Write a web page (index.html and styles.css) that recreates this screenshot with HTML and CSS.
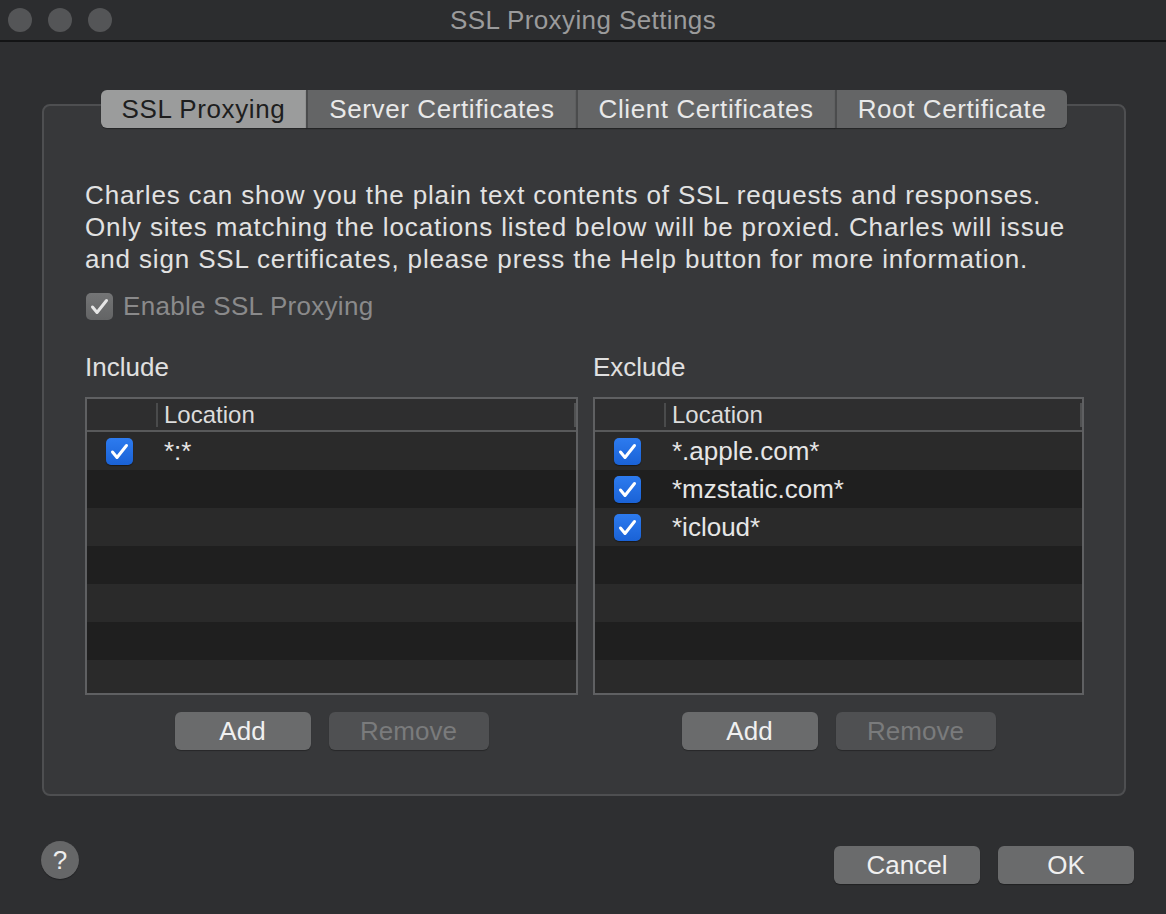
FILE: index.html
```html
<!DOCTYPE html>
<html>
<head>
<meta charset="utf-8">
<title>SSL Proxying Settings</title>
<link rel="stylesheet" href="styles.css">
</head>
<body>
<div class="window">
  <div class="titlebar">
    <div class="lights"><span class="light"></span><span class="light"></span><span class="light"></span></div>
    <div class="title">SSL Proxying Settings</div>
    <div></div>
  </div>
  <div class="main">
    <div class="tabs">
      <div class="tab sel">SSL Proxying</div>
      <div class="tab">Server Certificates</div>
      <div class="tab">Client Certificates</div>
      <div class="tab">Root Certificate</div>
    </div>
    <div class="box">
      <p class="desc">Charles can show you the plain text contents of SSL requests and responses.<br>Only sites matching the locations listed below will be proxied. Charles will issue<br>and sign SSL certificates, please press the Help button for more information.</p>
      <div class="enable">
        <span class="cb dis"><svg viewBox="0 0 27 27" width="27" height="27"><path d="M6.5 14 L11 19.5 L20.5 7.5" fill="none" stroke="#e6e6e6" stroke-width="3" stroke-linecap="round" stroke-linejoin="round"/></svg></span>
        <span>Enable SSL Proxying</span>
      </div>
      <div class="lists">
        <div class="list">
          <div class="list-label">Include</div>
          <div class="table">
            <div class="thead"><div class="th-cb"></div><div class="th-loc">Location</div><div class="th-end"></div></div>
            <div class="row"><div class="c-cb"><span class="cb on"><svg viewBox="0 0 27 27" width="27" height="27"><path d="M6.5 14 L11 19.5 L20.5 7.5" fill="none" stroke="#ffffff" stroke-width="3" stroke-linecap="round" stroke-linejoin="round"/></svg></span></div><div class="c-loc">*:*</div></div>
            <div class="row"></div>
            <div class="row"></div>
            <div class="row"></div>
            <div class="row"></div>
            <div class="row"></div>
            <div class="row"></div>
          </div>
          <div class="btns"><button class="btn add">Add</button><button class="btn remove" disabled>Remove</button></div>
        </div>
        <div class="list">
          <div class="list-label">Exclude</div>
          <div class="table">
            <div class="thead"><div class="th-cb"></div><div class="th-loc">Location</div><div class="th-end"></div></div>
            <div class="row"><div class="c-cb"><span class="cb on"><svg viewBox="0 0 27 27" width="27" height="27"><path d="M6.5 14 L11 19.5 L20.5 7.5" fill="none" stroke="#ffffff" stroke-width="3" stroke-linecap="round" stroke-linejoin="round"/></svg></span></div><div class="c-loc">*.apple.com*</div></div>
            <div class="row"><div class="c-cb"><span class="cb on"><svg viewBox="0 0 27 27" width="27" height="27"><path d="M6.5 14 L11 19.5 L20.5 7.5" fill="none" stroke="#ffffff" stroke-width="3" stroke-linecap="round" stroke-linejoin="round"/></svg></span></div><div class="c-loc">*mzstatic.com*</div></div>
            <div class="row"><div class="c-cb"><span class="cb on"><svg viewBox="0 0 27 27" width="27" height="27"><path d="M6.5 14 L11 19.5 L20.5 7.5" fill="none" stroke="#ffffff" stroke-width="3" stroke-linecap="round" stroke-linejoin="round"/></svg></span></div><div class="c-loc">*icloud*</div></div>
            <div class="row"></div>
            <div class="row"></div>
            <div class="row"></div>
            <div class="row"></div>
          </div>
          <div class="btns"><button class="btn add">Add</button><button class="btn remove" disabled>Remove</button></div>
        </div>
      </div>
    </div>
  </div>
  <div class="footer">
    <div class="help">?</div>
    <div class="actions"><button class="btn cancel">Cancel</button><button class="btn ok">OK</button></div>
  </div>
</div>
</body>
</html>
```

FILE: styles.css
```css
html, body {
  margin: 0;
  padding: 0;
  background: #2e2f31;
}
body {
  font-family: "Liberation Sans", Arial, sans-serif;
  font-size: 26px;
  color: #e0e0e0;
}
.window {
  width: 1166px;
  height: 914px;
  overflow: hidden;
  background: #2e2f31;
}
.titlebar {
  height: 40px;
  border-bottom: 2px solid #131415;
  background: #2c2d2f;
  display: grid;
  grid-template-columns: 1fr auto 1fr;
  align-items: center;
}
.lights {
  display: flex;
  gap: 16px;
  padding-left: 8px;
}
.light {
  width: 24px;
  height: 24px;
  border-radius: 50%;
  background: #545557;
}
.title {
  color: #9b9b9c;
  font-size: 26px;
  letter-spacing: 0.4px;
}
.main {
  padding: 48px 40px 0 42px;
  display: flex;
  flex-direction: column;
}
.tabs {
  display: flex;
  justify-content: center;
  position: relative;
  z-index: 1;
  height: 38px;
}
.tab {
  padding: 0 21px;
  line-height: 38px;
  letter-spacing: 0.6px;
  background: #646566;
  color: #e9e9e9;
  border-left: 2px solid #4b4c4d;
  box-shadow: 0 1px 1px rgba(0,0,0,0.35);
  white-space: nowrap;
}
.tab:first-child {
  border-left: none;
  border-radius: 6px 0 0 6px;
}
.tab:last-child {
  border-radius: 0 6px 6px 0;
}
.tab.sel {
  background: #9b9c9c;
  color: #1e1e1e;
}
.box {
  margin-top: -24px;
  height: 692px;
  box-sizing: border-box;
  border: 2px solid #4e4f51;
  border-radius: 8px;
  background: #37383a;
  padding: 73px 40px 0 41px;
}
.desc {
  margin: 0;
  line-height: 32px;
  letter-spacing: 0.85px;
  color: #e2e2e2;
  white-space: nowrap;
}
.enable {
  display: flex;
  align-items: center;
  gap: 10px;
  height: 32px;
  margin-top: 15px;
  padding-left: 1px;
  letter-spacing: 0.3px;
  color: #8a8a8b;
}
.cb {
  width: 27px;
  height: 27px;
  border-radius: 5px;
  display: block;
  flex: none;
}
.cb svg {
  display: block;
}
.cb.dis {
  background: linear-gradient(#747576, #636465);
}
.cb.on {
  background: linear-gradient(#2d7bef, #1a62d6);
  box-shadow: 0 1px 1px rgba(0,0,0,0.4);
}
.lists {
  margin-top: 29px;
  display: grid;
  grid-template-columns: 493px 491px;
  column-gap: 15px;
}
.list-label {
  line-height: 32px;
  color: #e0e0e0;
}
.table {
  margin-top: 14px;
  height: 298px;
  box-sizing: border-box;
  border: 2px solid #5f6062;
  background: #1f1f1f;
  overflow: hidden;
}
.thead {
  height: 31px;
  border-bottom: 2px solid #58595a;
  background: #2e2e2f;
  display: flex;
  align-items: center;
}
.th-cb {
  width: 71px;
  height: 24px;
  box-sizing: border-box;
  border-right: 2px solid #4a4b4c;
  flex: none;
}
.th-loc {
  flex: 1;
  padding-left: 6px;
  font-size: 24px;
  color: #dcdcdc;
}
.th-end {
  width: 2px;
  height: 24px;
  background: #505152;
  flex: none;
}
.row {
  height: 38px;
  display: flex;
  align-items: center;
  background: #2a2a2a;
}
.row:nth-child(odd) {
  background: #1f1f1f;
}
.c-cb {
  width: 71px;
  box-sizing: border-box;
  padding-left: 19px;
  flex: none;
}
.c-loc {
  padding-left: 6px;
  color: #e6e6e6;
}
.btns {
  margin-top: 17px;
  display: flex;
  justify-content: center;
  gap: 18px;
}
.btn {
  height: 38px;
  border: none;
  border-radius: 6px;
  font-family: "Liberation Sans", Arial, sans-serif;
  font-size: 26px;
  background: #6a6b6c;
  color: #f0f0f0;
  padding: 0;
  box-shadow: 0 1px 1px rgba(0,0,0,0.3);
}
.btn.add {
  width: 136px;
}
.btn.remove {
  width: 160px;
  background: #4f5052;
  color: #7a7b7c;
}
.footer {
  padding: 45px 32px 0 41px;
  display: flex;
  justify-content: space-between;
  align-items: flex-start;
}
.help {
  width: 38px;
  height: 38px;
  border-radius: 50%;
  background: #666768;
  color: #eeeeee;
  text-align: center;
  line-height: 38px;
  font-size: 26px;
  box-shadow: 0 1px 1px rgba(0,0,0,0.3);
}
.actions {
  margin-top: 5px;
  display: flex;
  gap: 18px;
}
.btn.cancel {
  width: 146px;
}
.btn.ok {
  width: 136px;
}
```
